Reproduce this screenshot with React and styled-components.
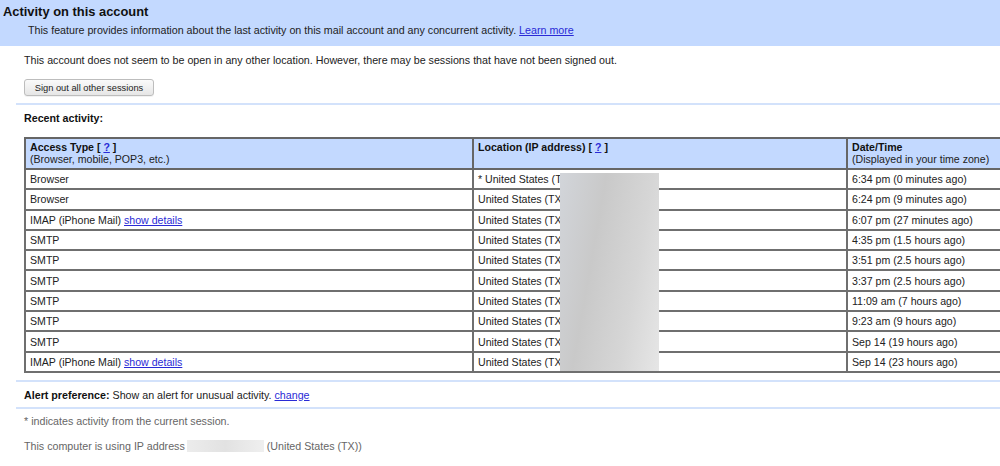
import React from "react";
import styled, { createGlobalStyle } from "styled-components";

const Global = createGlobalStyle`
  html, body { margin: 0; padding: 0; background: #fff; overflow: hidden; }
  body { font-family: "Liberation Sans", Arial, sans-serif; color: #222; width: 1000px; height: 466px; }
`;

const Page = styled.div`
  width: 1000px;
  height: 466px;
  overflow: hidden;
`;

const Header = styled.div`
  background: #c3d9ff;
  height: 46px;
  box-sizing: border-box;
  padding: 3px 0 0 3px;
`;

const Title = styled.div`
  font-size: 12.9px;
  font-weight: bold;
  color: #111;
  line-height: 17px;
`;

const Sub = styled.div`
  font-size: 10.7px;
  line-height: 14px;
  margin: 3px 0 0 25px;
  color: #222;
`;

const Link = styled.a`
  color: #2a2ad6;
  text-decoration: underline;
  cursor: pointer;
`;

const Section = styled.div`
  padding-left: 24px;
  font-size: 10.7px;
  line-height: 13px;
  color: ${(p) => (p.$muted ? "#666" : "#222")};
  margin-top: ${(p) => p.$mt || 0}px;
`;

const Button = styled.button`
  font-family: "Liberation Sans", Arial, sans-serif;
  font-size: 9.3px;
  color: #222;
  height: 17px;
  width: 130px;
  padding: 0;
  margin: 0;
  border: 1px solid #bdbdbd;
  border-radius: 3px;
  background: linear-gradient(#fafafa, #e6e6e6);
  box-shadow: 0 1px 0 rgba(0,0,0,0.05);
  display: block;
`;

const Separator = styled.div`
  margin-left: 16px;
  height: 2px;
  background: #d3e2fb;
  margin-top: ${(p) => p.$mt || 0}px;
`;

const Bold = styled.b`
  font-weight: bold;
  color: #111;
`;

const TableWrap = styled.div`
  position: relative;
  margin: 12px 0 0 24px;
`;

const Table = styled.table`
  border-collapse: collapse;
  table-layout: fixed;
  width: 1060px;
  border: 2px solid #555;
  font-size: 10.6px;
  color: #222;
`;

const Th = styled.th`
  background: #c3d9ff;
  text-align: left;
  vertical-align: top;
  font-weight: normal;
  border: 2px solid #666;
  padding: 3px 4px 0 4px;
  height: 31px;
  box-sizing: border-box;
  line-height: 11.5px;
`;

const Td = styled.td`
  border: 2px solid #6f6f6f;
  padding: 0 4px;
  height: 18.3px;
  line-height: 12px;
  white-space: nowrap;
  overflow: hidden;
`;

const Redact = styled.div`
  position: absolute;
  left: 536px;
  top: 36px;
  width: 99px;
  height: 198px;
  background: linear-gradient(100deg, #d2d5da 0%, #c9c9c9 35%, #d6d6d6 70%, #e6e6e6 100%);
`;

const IpRedact = styled.span`
  display: inline-block;
  width: 77px;
  height: 12px;
  vertical-align: -2px;
  margin: 0 3px 0 2px;
  background: linear-gradient(90deg, #ececec, #e2e2e2 50%, #efefef);
`;

const rows = [
  ["Browser", false, true, "6:34 pm (0 minutes ago)"],
  ["Browser", false, false, "6:24 pm (9 minutes ago)"],
  ["IMAP (iPhone Mail)", true, false, "6:07 pm (27 minutes ago)"],
  ["SMTP", false, false, "4:35 pm (1.5 hours ago)"],
  ["SMTP", false, false, "3:51 pm (2.5 hours ago)"],
  ["SMTP", false, false, "3:37 pm (2.5 hours ago)"],
  ["SMTP", false, false, "11:09 am (7 hours ago)"],
  ["SMTP", false, false, "9:23 am (9 hours ago)"],
  ["SMTP", false, false, "Sep 14 (19 hours ago)"],
  ["IMAP (iPhone Mail)", true, false, "Sep 14 (23 hours ago)"],
];

export default function App() {
  return (
    <Page>
      <Global />
      <Header>
        <Title>Activity on this account</Title>
        <Sub>
          This feature provides information about the last activity on this mail account and any concurrent activity.{" "}
          <Link>Learn more</Link>
        </Sub>
      </Header>
      <Section $mt={8}>
        This account does not seem to be open in any other location. However, there may be sessions that have not been signed out.
      </Section>
      <Section $mt={12}>
        <Button>Sign out all other sessions</Button>
      </Section>
      <Separator $mt={7} />
      <Section $mt={7}>
        <Bold>Recent activity:</Bold>
      </Section>
      <TableWrap>
        <Table>
          <colgroup>
            <col style={{ width: 448 }} />
            <col style={{ width: 374 }} />
            <col style={{ width: 238 }} />
          </colgroup>
          <thead>
            <tr>
              <Th>
                <Bold>Access Type [ <Link>?</Link> ]</Bold>
                <br />
                (Browser, mobile, POP3, etc.)
              </Th>
              <Th>
                <Bold>Location (IP address) [ <Link>?</Link> ]</Bold>
              </Th>
              <Th>
                <Bold>Date/Time</Bold>
                <br />
                (Displayed in your time zone)
              </Th>
            </tr>
          </thead>
          <tbody>
            {rows.map(([type, details, current, time], i) => (
              <tr key={i}>
                <Td>
                  {type}
                  {details && (
                    <>
                      {" "}
                      <Link>show details</Link>
                    </>
                  )}
                </Td>
                <Td>{current ? "* United States (TX)" : "United States (TX)"}</Td>
                <Td>{time}</Td>
              </tr>
            ))}
          </tbody>
        </Table>
        <Redact />
      </TableWrap>
      <Separator $mt={7} />
      <Section $mt={7}>
        <Bold>Alert preference:</Bold> Show an alert for unusual activity. <Link>change</Link>
      </Section>
      <Separator $mt={5} />
      <Section $mt={6} $muted>
        * indicates activity from the current session.
      </Section>
      <Section $mt={12} $muted>
        This computer is using IP address<IpRedact />(United States (TX))
      </Section>
    </Page>
  );
}
